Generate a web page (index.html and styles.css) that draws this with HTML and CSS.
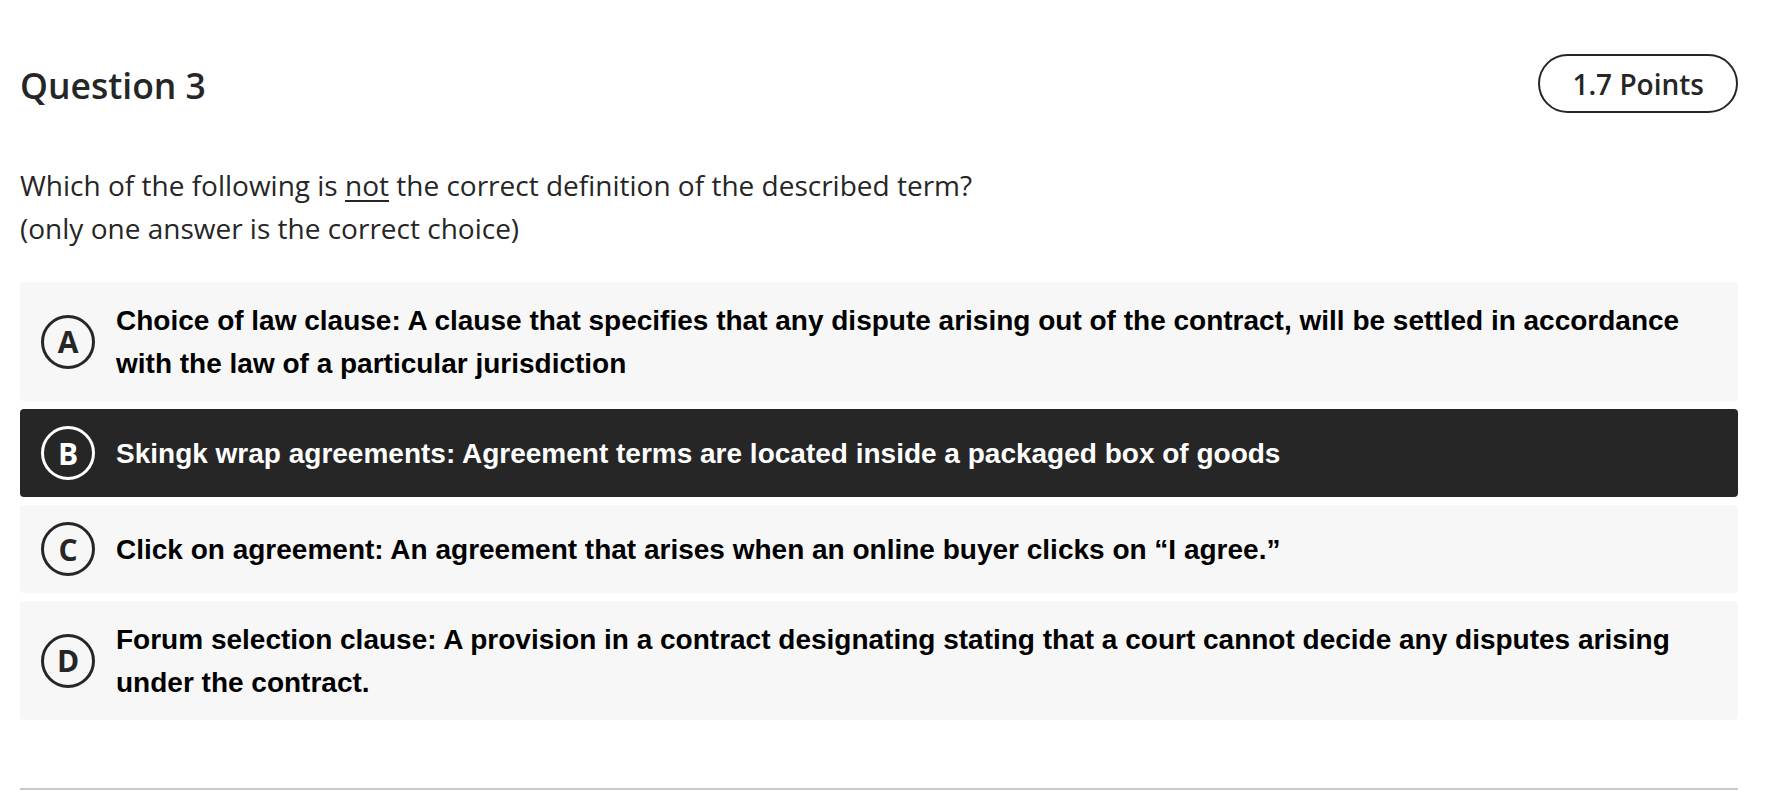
FILE: index.html
```html
<!DOCTYPE html>
<html lang="en">
<head>
    <meta charset="UTF-8">
    <meta name="viewport" content="width=device-width, initial-scale=1.0">
    <title>Question 3</title>
    <link rel="stylesheet" href="styles.css">
</head>
<body>
    <div class="container">
        <div class="question-header">
            <h1 class="question-title">Question 3</h1>
            <div class="points">1.7 Points</div>
        </div>
        <p class="question-text">
            Which of the following is <u>not</u> the correct definition of the described term?<br>
            (only one answer is the correct choice)
        </p>
        <div class="answers">
            <div class="answer">
                <span class="answer-letter">A</span>
                <span class="answer-text">Choice of law clause: A clause that specifies that any dispute arising out of the contract, will be settled in accordance with the law of a particular jurisdiction</span>
            </div>
            <div class="answer selected">
                <span class="answer-letter">B</span>
                <span class="answer-text">Skingk wrap agreements: Agreement terms are located inside a packaged box of goods</span>
            </div>
            <div class="answer">
                <span class="answer-letter">C</span>
                <span class="answer-text">Click on agreement: An agreement that arises when an online buyer clicks on &ldquo;I agree.&rdquo;</span>
            </div>
            <div class="answer">
                <span class="answer-letter">D</span>
                <span class="answer-text">Forum selection clause: A provision in a contract designating stating that a court cannot decide any disputes arising under the contract.</span>
            </div>
        </div>
        <hr class="divider">
    </div>
</body>
</html>
```

FILE: styles.css
```css
body {
    font-family: 'Open Sans', sans-serif;
    background-color: #fff;
    color: #262626;
    margin: 0;
    padding: 0;
}
.container {
    padding: 54px 52px 0 20px;
}
.question-header {
    display: flex;
    justify-content: space-between;
    align-items: center;
}
.question-title {
    margin: 0;
    font-size: 35.5px;
    font-weight: 600;
    line-height: 1.3;
    padding-top: 3px;
}
.points {
    border: 2px solid #262626;
    border-radius: 30px;
    padding: 8.5px 32px;
    font-size: 28px;
    font-weight: 600;
    line-height: 38px;
}
.question-text {
    margin: 51px 0 0;
    font-size: 28px;
    line-height: 43px;
}
.question-text u {
    text-underline-offset: 4px;
    text-decoration-thickness: 2px;
}
.answers {
    display: flex;
    flex-direction: column;
    gap: 8px;
    margin-top: 32px;
}
.answer {
    display: flex;
    align-items: center;
    gap: 21px;
    min-height: 88px;
    box-sizing: border-box;
    padding: 16.5px 21px;
    background-color: #f7f7f7;
    border-radius: 4px;
    color: #000;
}
.answer.selected {
    background-color: #262626;
    color: #fff;
}
.answer-letter {
    flex: none;
    width: 54px;
    height: 54px;
    box-sizing: border-box;
    border: 3px solid #262626;
    border-radius: 50%;
    display: flex;
    justify-content: center;
    align-items: center;
    font-size: 30px;
    font-weight: 700;
    color: #262626;
}
.selected .answer-letter {
    border-color: #fff;
    color: #fff;
}
.answer-text {
    font-family: 'Liberation Sans', Arial, sans-serif;
    font-size: 28px;
    font-weight: 700;
    line-height: 43px;
}
.divider {
    margin: 68px 0 0;
    border: none;
    height: 2px;
    background-color: #c8c8c8;
}
```
